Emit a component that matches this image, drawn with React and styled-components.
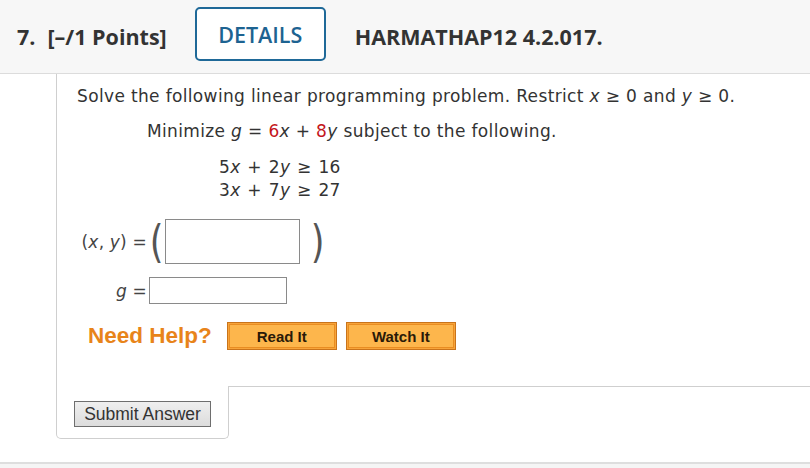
import React from "react";
import styled, { createGlobalStyle } from "styled-components";

const Global = createGlobalStyle`
  html, body { margin: 0; padding: 0; background: #fff; }
  body { width: 810px; height: 468px; overflow: hidden; }
`;

const Page = styled.div`
  width: 810px;
  height: 468px;
  display: flex;
  flex-direction: column;
  background: #fff;
`;

const Header = styled.div`
  height: 74px;
  box-sizing: border-box;
  border-bottom: 1px solid #dcdcdc;
  background: #f7f7f7;
  display: flex;
  align-items: center;
  padding-left: 17px;
  font-family: "Open Sans", sans-serif;
  font-weight: 700;
  font-size: 21.5px;
  color: #333;
`;

const Num = styled.span`
  margin-right: 12px;
`;

const Points = styled.span`
  margin-right: 28px;
`;

const DetailsBtn = styled.div`
  box-sizing: border-box;
  width: 131px;
  height: 54px;
  border: 2px solid #1f6998;
  border-radius: 5px;
  display: flex;
  align-items: center;
  justify-content: center;
  color: #1d6391;
  font-weight: 600;
  font-size: 21.5px;
  margin-top: -5px;
  margin-right: 29px;
  background: #fff;
`;

const Code = styled.span``;

const Section = styled.div`
  margin-left: 56px;
  display: flex;
  flex-direction: column;
`;

const Content = styled.div`
  border-left: 1px solid #cfcfcf;
  padding: 12px 0 36px 20px;
  font-family: "DejaVu Sans", Verdana, sans-serif;
  font-size: 17px;
  letter-spacing: 0.35px;
  color: #333;
`;

const Para = styled.div`
  line-height: 20px;
  white-space: nowrap;
  margin-bottom: ${(p) => p.$mb || 0}px;
  padding-left: ${(p) => p.$indent || 0}px;
`;

const MathLine = styled(Para)`
  line-height: 23px;
  word-spacing: 1px;
`;

const V = styled.i`
  font-style: italic;
`;

const Red = styled.span`
  color: #c4161c;
`;

const AnswerRow = styled.div`
  display: flex;
  align-items: center;
  margin-top: ${(p) => p.$mt || 0}px;
`;

const Label = styled.div`
  width: 70px;
  text-align: right;
  white-space: nowrap;
  font-size: 17px;
  letter-spacing: 0.2px;
  color: #444;
`;

const Paren = styled.span`
  font-family: "DejaVu Sans", sans-serif;
  font-weight: 400;
  font-size: 44px;
  line-height: 44px;
  color: #555;
  transform: scaleX(0.8);
  display: inline-block;
  margin: ${(p) => p.$m};
`;

const Box = styled.div`
  box-sizing: border-box;
  width: ${(p) => p.$w}px;
  height: ${(p) => p.$h}px;
  border: 1px solid #8a8a8a;
  background: #fff;
  margin-left: ${(p) => p.$ml || 0}px;
`;

const HelpRow = styled.div`
  display: flex;
  align-items: center;
  margin-top: 18px;
  padding-left: 11px;
`;

const NeedHelp = styled.span`
  font-family: "Liberation Sans", Arial, sans-serif;
  font-weight: 700;
  font-size: 22.5px;
  letter-spacing: 0;
  color: #e8841a;
  margin-right: 15px;
`;

const HelpBtn = styled.div`
  box-sizing: border-box;
  width: 110px;
  height: 28px;
  border: 1px solid #c9741b;
  box-shadow: inset 0 0 0 1px #f7a43a, inset 0 0 0 2px #e98d22;
  background: #fdb64c;
  display: flex;
  align-items: center;
  justify-content: center;
  font-family: "Liberation Sans", Arial, sans-serif;
  font-weight: 700;
  font-size: 15px;
  letter-spacing: 0;
  color: #2a1a08;
  margin-right: 9px;
`;

const FooterRow = styled.div`
  display: flex;
  align-items: flex-start;
`;

const SubmitCell = styled.div`
  box-sizing: border-box;
  width: 173px;
  height: 53px;
  border-left: 1px solid #cfcfcf;
  border-right: 1px solid #cfcfcf;
  border-bottom: 1px solid #cfcfcf;
  border-radius: 0 0 5px 5px;
  padding: 15px 0 0 17px;
`;

const SubmitBtn = styled.div`
  box-sizing: border-box;
  width: 137px;
  height: 26px;
  border: 1px solid #6e6e6e;
  background: linear-gradient(#efefef, #dcdcdc);
  display: flex;
  align-items: center;
  justify-content: center;
  font-family: "Liberation Sans", Arial, sans-serif;
  font-size: 17.5px;
  color: #333;
`;

const RightCell = styled.div`
  flex: 1;
  border-top: 1px solid #cfcfcf;
  margin-left: -1px;
`;

const Spacer = styled.div`
  height: 23px;
`;

const BottomBar = styled.div`
  flex: 1;
  border-top: 2px solid #dedede;
  background: #f5f5f5;
`;

export default function App() {
  return (
    <>
      <Global />
      <Page>
        <Header>
          <Num>7.</Num>
          <Points>[–/1 Points]</Points>
          <DetailsBtn>DETAILS</DetailsBtn>
          <Code>HARMATHAP12 4.2.017.</Code>
        </Header>
        <Section>
          <Content>
            <Para $mb={15}>
              Solve the following linear programming problem. Restrict <V>x</V> ≥ 0 and <V>y</V> ≥ 0.
            </Para>
            <Para $mb={15} $indent={70}>
              Minimize <V>g</V> = <Red>6</Red><V>x</V> + <Red>8</Red><V>y</V> subject to the following.
            </Para>
            <MathLine $indent={142}>
              5<V>x</V> + 2<V>y</V> ≥ 16
            </MathLine>
            <MathLine $indent={142}>
              3<V>x</V> + 7<V>y</V> ≥ 27
            </MathLine>
            <AnswerRow $mt={17}>
              <Label>
                (<V>x</V>, <V>y</V>) =
              </Label>
              <Paren $m="0 0 0 1px">(</Paren>
              <Box $w={135} $h={45} $ml={-1} />
              <Paren $m="0 0 0 9px">)</Paren>
            </AnswerRow>
            <AnswerRow $mt={13}>
              <Label>
                <V>g</V> =
              </Label>
              <Box $w={138} $h={27} $ml={2} />
            </AnswerRow>
            <HelpRow>
              <NeedHelp>Need Help?</NeedHelp>
              <HelpBtn>Read It</HelpBtn>
              <HelpBtn>Watch It</HelpBtn>
            </HelpRow>
          </Content>
          <FooterRow>
            <SubmitCell>
              <SubmitBtn>Submit Answer</SubmitBtn>
            </SubmitCell>
            <RightCell />
          </FooterRow>
        </Section>
        <Spacer />
        <BottomBar />
      </Page>
    </>
  );
}
